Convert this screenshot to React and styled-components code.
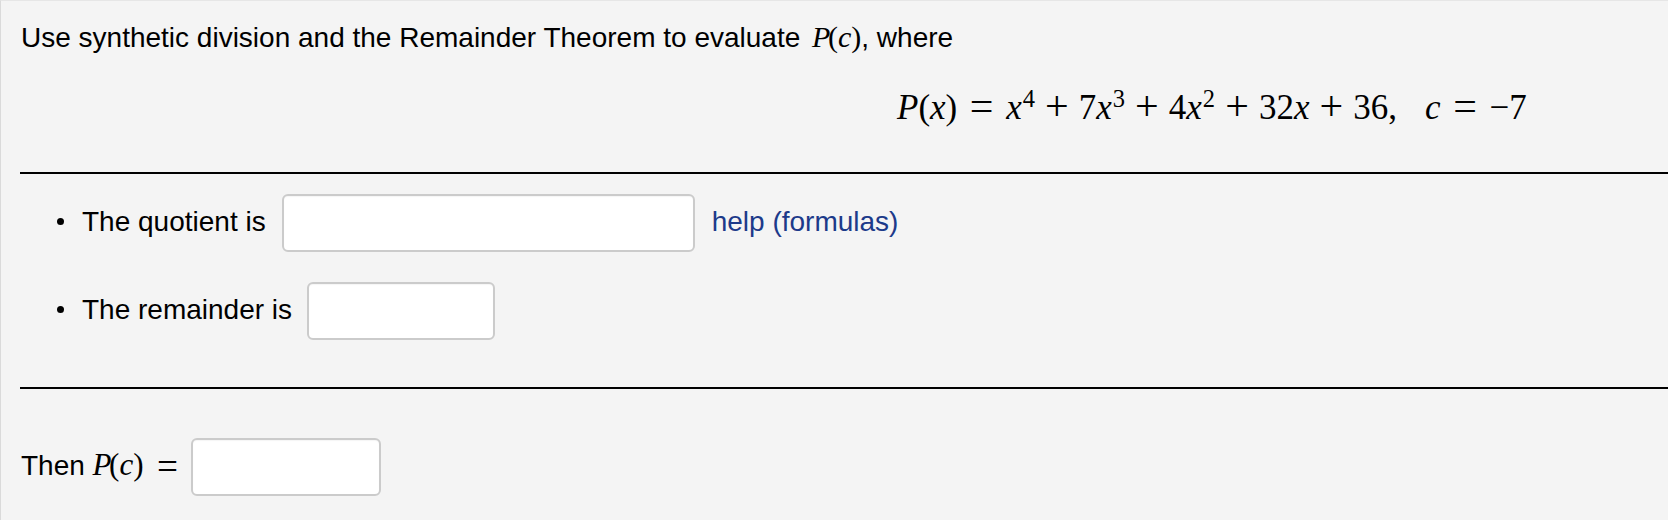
import React from "react";
import styled, { createGlobalStyle } from "styled-components";

const GlobalStyle = createGlobalStyle`
  html, body {
    margin: 0;
    padding: 0;
    background: #f4f4f4;
  }
  body {
    font-family: "Liberation Sans", Arial, Helvetica, sans-serif;
    color: #000;
  }
`;

const Panel = styled.div`
  box-sizing: border-box;
  min-height: 520px;
  background: #f4f4f4;
  border-top: 1px solid #e6e6e6;
  border-left: 1px solid #dadada;
  padding: 20px 0 0 19px;
  font-size: 28px;
`;

const Intro = styled.p`
  margin: 0 0 0 1px;
  line-height: 31px;
  white-space: nowrap;
`;

const DisplayMath = styled.div`
  margin: 32px 0 0 0;
  padding-left: 877px;
  height: 40px;
  line-height: 40px;
  font-family: "Liberation Serif", "Times New Roman", serif;
  font-size: 35px;
  white-space: nowrap;
`;

const InlineMath = styled.span`
  font-family: "Liberation Serif", "Times New Roman", serif;
  font-size: ${(p) => p.$size || 30}px;
  margin-left: ${(p) => p.$lead || 0}px;
  white-space: nowrap;
`;

const Mi = styled.span`
  font-style: italic;
  margin-right: ${(p) => p.$kern || 0}em;
`;

const Mn = styled.span`
  font-style: normal;
`;

/* operators drawn a bit larger, like the TeX glyphs */
const Mo = styled.span`
  font-style: normal;
  font-size: 1.2em;
  line-height: 1;
  vertical-align: -0.03em;
  margin: 0 ${(p) => p.$space ?? 0.24}em;
`;

const Sup = styled.sup`
  font-size: 0.7em;
  line-height: 1;
  vertical-align: 0.5em;
  margin-left: 0.04em;
`;

const Quad = styled.span`
  display: inline-block;
  width: 0.8em;
`;

const Rule = styled.div`
  height: 2px;
  background: #000;
  margin-top: ${(p) => p.$top}px;
`;

const List = styled.ul`
  list-style: none;
  margin: 20px 0 0 0;
  padding: 0 0 0 37px;
  display: flex;
  flex-direction: column;
  gap: 30px;
`;

const Item = styled.li`
  display: flex;
  align-items: center;
  height: 58px;
`;

const Bullet = styled.span`
  width: 7px;
  height: 7px;
  border-radius: 50%;
  background: #000;
  margin: 0 18px 0 0;
  position: relative;
  top: -2px;
`;

const Label = styled.span`
  line-height: 31px;
  padding-bottom: 4px;
  white-space: nowrap;
`;

const AnswerBox = styled.input`
  box-sizing: border-box;
  width: ${(p) => p.$width}px;
  height: 58px;
  margin-left: ${(p) => p.$gap ?? 16}px;
  border: 2px solid #cbcbcb;
  border-radius: 6px;
  background: #fff;
  font-size: 24px;
  outline: none;
  box-shadow: inset 0 1px 1px rgba(0, 0, 0, 0.04);
`;

const Help = styled.a`
  margin-left: 17px;
  color: #1c3a8a;
  text-decoration: none;
  line-height: 31px;
  padding-bottom: 4px;
  cursor: pointer;
`;

const FinalRow = styled.div`
  display: flex;
  align-items: center;
  height: 58px;
  margin-top: 49px;
  padding-left: 1px;
`;

const PofC = ({ size, lead }) => (
  <InlineMath $size={size} $lead={lead}>
    <Mi $kern={-0.08}>P</Mi>
    <Mn>(</Mn>
    <Mi>c</Mi>
    <Mn>)</Mn>
  </InlineMath>
);

export default function App() {
  return (
    <>
      <GlobalStyle />
      <Panel>
        <Intro>
          Use synthetic division and the Remainder Theorem to evaluate{" "}
          <PofC size={30} lead={4} />, where
        </Intro>

        <DisplayMath>
          <Mi>P</Mi>
          <Mn>(</Mn>
          <Mi>x</Mi>
          <Mn>)</Mn>
          <Mo $space={0.3}>=</Mo>
          <Mi>x</Mi>
          <Sup>4</Sup>
          <Mo>+</Mo>
          <Mn>7</Mn>
          <Mi>x</Mi>
          <Sup>3</Sup>
          <Mo>+</Mo>
          <Mn>4</Mn>
          <Mi>x</Mi>
          <Sup>2</Sup>
          <Mo>+</Mo>
          <Mn>32</Mn>
          <Mi>x</Mi>
          <Mo>+</Mo>
          <Mn>36,</Mn>
          <Quad />
          <Mi>c</Mi>
          <Mo $space={0.3}>=</Mo>
          <Mn>−7</Mn>
        </DisplayMath>

        <Rule $top={47} />

        <List>
          <Item>
            <Bullet />
            <Label>The quotient is</Label>
            <AnswerBox type="text" $width={413} />
            <Help>help (formulas)</Help>
          </Item>
          <Item>
            <Bullet />
            <Label>The remainder is</Label>
            <AnswerBox type="text" $width={188} $gap={15} />
          </Item>
        </List>

        <Rule $top={47} />

        <FinalRow>
          <Label>Then</Label>
          <Label>
            &nbsp;
            <PofC size={31} />
          </Label>
          <InlineMath $size={31}>
            <Mo $space={0.36}>=</Mo>
          </InlineMath>
          <AnswerBox type="text" $width={190} $gap={0} />
        </FinalRow>
      </Panel>
    </>
  );
}
